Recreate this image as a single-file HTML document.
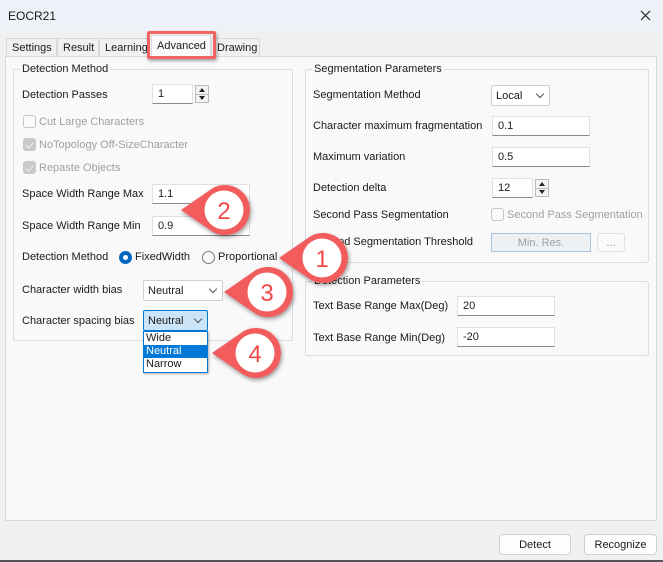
<!DOCTYPE html>
<html><head><meta charset="utf-8"><style>
*{box-sizing:border-box;margin:0;padding:0}
body{width:663px;height:562px;overflow:hidden;background:#f0f0f0;font-family:"Liberation Sans",sans-serif;font-size:11px;color:#1a1a1a;position:relative}
.a{position:absolute;white-space:nowrap}
.title{left:0;top:0;width:663px;height:31px;background:#eef1f7}
.tab{position:absolute;top:38px;height:18px;border:1px solid #d9d9d9;border-bottom:none;background:#f0f0f0;font-size:11px;padding:3px 0 0 5px}
.panel{left:5px;top:56px;width:652px;height:465px;background:#f9f9f9;border:1px solid #d9d9d9}
.grp{position:absolute;border:1px solid #dcdcdc;border-radius:2px}
.gt{position:absolute;background:#f9f9f9;padding:0 2px;top:-7px;left:6px}
.inp{position:absolute;background:#fff;border:1px solid #e0e0e0;border-bottom:1px solid #8a8a8a;height:20px;padding:3px 0 0 5px;font-size:11px}
.spin{position:absolute;width:14px;height:18px;border:1px solid #bbb;background:#f3f3f3}
.spin:before{content:"";position:absolute;left:3px;top:2px;border-left:3px solid transparent;border-right:3px solid transparent;border-bottom:4px solid #222}
.spin:after{content:"";position:absolute;left:3px;top:10px;border-left:3px solid transparent;border-right:3px solid transparent;border-top:4px solid #222}
.spin i{position:absolute;left:0;top:8px;width:12px;border-top:1px solid #bbb}
.cmb{position:absolute;background:#fff;border:1px solid #cfcfcf;border-radius:2px;height:21px;padding:4px 0 0 4px}
.cmb b{position:absolute;right:6px;top:5px;width:6px;height:6px;border-right:1px solid #555;border-bottom:1px solid #555;transform:rotate(45deg)}
.cb{position:absolute;width:13px;height:13px;border:1px solid #c5c5c5;border-radius:3px;background:#fafafa}
.cb.on{background:#c9c9c9;border-color:#c9c9c9}
.cb.on:after{content:"";position:absolute;left:3px;top:1px;width:4px;height:7px;border-right:1.5px solid #eee;border-bottom:1.5px solid #eee;transform:rotate(45deg)}
.dis{color:#a0a0a0}
.btn{position:absolute;background:#fdfdfd;border:1px solid #d0d0d0;border-radius:4px;height:21px;text-align:center;padding-top:4px}
</style></head><body>
<div class="a title"></div>
<div class="a" style="left:8px;top:9px;font-size:12px">EOCR21</div>
<svg class="a" style="left:640px;top:10px" width="11" height="11"><path d="M1 1L10 10M10 1L1 10" stroke="#222" stroke-width="1.2"/></svg>

<div class="a panel"></div>
<div class="tab" style="left:6px;width:51px">Settings</div>
<div class="tab" style="left:57px;width:42px">Result</div>
<div class="tab" style="left:99px;width:49px">Learning</div>
<div class="tab" style="left:151px;top:35px;height:22px;width:60px;background:#f9f9f9;padding-top:4px">Advanced</div>
<div class="tab" style="left:211px;width:49px">Drawing</div>
<div class="a" style="left:147px;top:31px;width:69px;height:28px;border:3px solid #f26464;border-radius:2px;box-shadow:1px 2px 3px rgba(0,0,0,.35)"></div>

<div class="grp" style="left:13px;top:69px;width:280px;height:272px"><span class="gt">Detection Method</span></div>
<div class="a" style="left:22px;top:89px">Detection Passes</div>
<div class="inp" style="left:152px;top:84px;width:41px">1</div>
<div class="spin" style="left:195px;top:85px"><i></i></div>
<div class="cb" style="left:23px;top:115px"></div><div class="a dis" style="left:39px;top:116px">Cut Large Characters</div>
<div class="cb on" style="left:23px;top:138px"></div><div class="a dis" style="left:39px;top:139px">NoTopology Off-SizeCharacter</div>
<div class="cb on" style="left:23px;top:161px"></div><div class="a dis" style="left:39px;top:162px">Repaste Objects</div>
<div class="a" style="left:22px;top:188px">Space Width Range Max</div>
<div class="inp" style="left:152px;top:184px;width:98px">1.1</div>
<div class="a" style="left:22px;top:220px">Space Width Range Min</div>
<div class="inp" style="left:152px;top:216px;width:98px">0.9</div>
<div class="a" style="left:22px;top:251px">Detection Method</div>
<div class="a" style="left:119px;top:251px;width:13px;height:13px;border-radius:50%;background:#0067c0"><div style="position:absolute;left:4px;top:4px;width:5px;height:5px;border-radius:50%;background:#fff"></div></div>
<div class="a" style="left:135px;top:251px">FixedWidth</div>
<div class="a" style="left:202px;top:251px;width:13px;height:13px;border-radius:50%;border:1px solid #777;background:#fafafa"></div>
<div class="a" style="left:218px;top:251px">Proportional</div>
<div class="a" style="left:22px;top:284px">Character width bias</div>
<div class="cmb" style="left:143px;top:280px;width:80px">Neutral<b></b></div>
<div class="a" style="left:22px;top:315px">Character spacing bias</div>
<div class="cmb" style="left:143px;top:310px;width:65px;background:#cce4f7;border-color:#0078d4">Neutral<b></b></div>
<div class="a" style="left:143px;top:331px;width:65px;height:42px;background:#fff;border:1px solid #0078d4;box-shadow:1px 1px 2px rgba(0,0,0,.3)">
<div style="height:13px;padding-left:2px;line-height:13px">Wide</div>
<div style="height:13px;padding-left:2px;line-height:13px;background:#0078d7;color:#fff">Neutral</div>
<div style="height:13px;padding-left:2px;line-height:13px">Narrow</div></div>

<div class="grp" style="left:305px;top:69px;width:344px;height:194px"><span class="gt">Segmentation Parameters</span></div>
<div class="a" style="left:313px;top:89px">Segmentation Method</div>
<div class="cmb" style="left:491px;top:85px;width:59px">Local<b></b></div>
<div class="a" style="left:313px;top:120px">Character maximum fragmentation</div>
<div class="inp" style="left:492px;top:116px;width:98px">0.1</div>
<div class="a" style="left:313px;top:151px">Maximum variation</div>
<div class="inp" style="left:492px;top:147px;width:98px">0.5</div>
<div class="a" style="left:313px;top:182px">Detection delta</div>
<div class="inp" style="left:492px;top:178px;width:41px">12</div>
<div class="spin" style="left:535px;top:179px"><i></i></div>
<div class="a" style="left:313px;top:209px">Second Pass Segmentation</div>
<div class="cb" style="left:491px;top:208px"></div><div class="a dis" style="left:507px;top:209px">Second Pass Segmentation</div>
<div class="a" style="left:313px;top:236px">Second Segmentation Threshold</div>
<div class="a dis" style="left:491px;top:233px;width:100px;height:19px;border:1px solid #a8c4e0;background:#eef1f4;text-align:center;padding-top:3px">Min. Res.</div>
<div class="a dis" style="left:597px;top:233px;width:28px;height:19px;border:1px solid #e2e2e2;border-radius:3px;text-align:center;padding-top:3px">...</div>

<div class="grp" style="left:305px;top:281px;width:344px;height:75px"><span class="gt">Detection Parameters</span></div>
<div class="a" style="left:313px;top:300px">Text Base Range Max(Deg)</div>
<div class="inp" style="left:457px;top:296px;width:98px">20</div>
<div class="a" style="left:313px;top:332px">Text Base Range Min(Deg)</div>
<div class="inp" style="left:457px;top:327px;width:98px">-20</div>

<div class="btn" style="left:499px;top:534px;width:72px">Detect</div>
<div class="btn" style="left:584px;top:534px;width:73px">Recognize</div>
<div class="a" style="left:0;top:560px;width:663px;height:2px;background:#555"></div>

<svg class="a" style="left:0;top:0" width="663" height="562">
<defs><filter id="sh" x="-30%" y="-30%" width="160%" height="160%"><feDropShadow dx="1" dy="2" stdDeviation="2" flood-color="#000" flood-opacity=".4"/></filter>
<g id="c"><path d="M-43 0L-14 -20A25 25 0 1 1 -14 20Z" fill="#f25b5b"/><circle r="19.5" fill="#fff"/></g></defs>
<g filter="url(#sh)">
<use href="#c" transform="translate(224,210)"/>
<use href="#c" transform="translate(322,258)"/>
<use href="#c" transform="translate(267,292)"/>
<use href="#c" transform="translate(255,353)"/>
</g>
<g font-family="Liberation Sans,sans-serif" font-size="24" fill="#f04848" text-anchor="middle">
<text x="224" y="219">2</text><text x="322" y="267">1</text><text x="267" y="301">3</text><text x="255" y="362">4</text></g>
</svg>
</body></html>
